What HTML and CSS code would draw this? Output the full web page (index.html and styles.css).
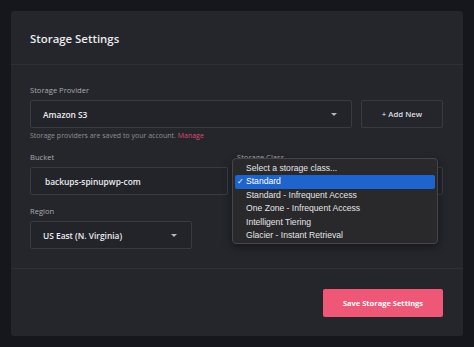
FILE: index.html
```html
<!DOCTYPE html>
<html>
<head>
<meta charset="utf-8">
<link rel="stylesheet" href="styles.css">
</head>
<body>
<div class="card">
  <div class="card-header"><h1 class="title">Storage Settings</h1></div>
  <div class="card-body">
    <div class="label">Storage Provider</div>
    <div class="row-provider">
      <div class="select"><span>Amazon S3</span><i class="caret"></i></div>
      <div class="btn-outline">+ Add New</div>
    </div>
    <div class="help">Storage providers are saved to your account. <span class="link">Manage</span></div>
    <div class="row-bucket">
      <div class="field">
        <div class="label">Bucket</div>
        <div class="input"><span>backups-spinupwp-com</span></div>
      </div>
      <div class="field class-field">
        <div class="label">Storage Class</div>
        <div class="input"></div>
        <div class="menu">
          <div class="opt">Select a storage class...</div>
          <div class="opt selected"><span class="check">✓</span>Standard</div>
          <div class="opt">Standard - Infrequent Access</div>
          <div class="opt">One Zone - Infrequent Access</div>
          <div class="opt">Intelligent Tiering</div>
          <div class="opt">Glacier - Instant Retrieval</div>
        </div>
      </div>
    </div>
    <div class="label region-label">Region</div>
    <div class="select region"><span>US East (N. Virginia)</span><i class="caret"></i></div>
  </div>
  <div class="card-footer">
    <div class="btn-primary">Save Storage Settings</div>
  </div>
</div>
</body>
</html>
```

FILE: styles.css
```css
* { box-sizing: border-box; }
html, body { margin: 0; }
body {
  background: #16171c;
  padding: 11px;
  font-family: "Open Sans", "Noto Sans", sans-serif;
  color: #e6e6e9;
  width: 474px;
  height: 347px;
  overflow: hidden;
}
.card {
  width: 452px;
  height: 325px;
  background: #25262c;
  border-radius: 3px;
  display: flex;
  flex-direction: column;
}
.card-header {
  height: 54px;
  padding-left: 19px;
  display: flex;
  align-items: center;
  border-bottom: 1px solid #2e2f35;
}
.title {
  margin: 0;
  font-size: 11.4px;
  font-weight: 600;
  color: #ececee;
  padding-top: 2px;
}
.card-body {
  padding: 20px 20px 19px 19px;
  border-bottom: 1px solid #2e2f35;
  display: flex;
  flex-direction: column;
}
.label {
  font-size: 7.6px;
  line-height: 10px;
  color: #a9aab0;
  margin-bottom: 5px;
}
.row-provider {
  display: flex;
  gap: 9px;
}
.select, .input {
  height: 28px;
  border: 1px solid #3a3b41;
  border-radius: 2px;
  background: #23242a;
  display: flex;
  align-items: center;
  padding: 0 13px 0 12px;
  font-size: 8.4px;
  font-weight: 600;
  color: #ececee;
}
.row-provider .select { width: 322px; justify-content: space-between; padding-right: 14px; }
.caret {
  width: 0; height: 0;
  border-left: 3px solid transparent;
  border-right: 3px solid transparent;
  border-top: 3px solid #b5b6bb;
}
.btn-outline {
  width: 82px;
  height: 28px;
  border: 1px solid #3a3b41;
  border-radius: 2px;
  display: flex;
  align-items: center;
  justify-content: center;
  font-size: 7.8px;
  font-weight: 600;
  color: #dcdde0;
}
.help {
  margin-top: 3px;
  font-size: 7px;
  line-height: 10px;
  color: #8e8f95;
}
.link { color: #d94c6c; }
.row-bucket {
  margin-top: 11px;
  display: grid;
  grid-template-columns: 198px 1fr;
  gap: 9px;
}
.input { padding-left: 14px; }
.class-field { position: relative; }
.menu {
  position: absolute;
  left: -5px;
  top: 6px;
  width: 206px;
  height: 86px;
  background: #29292c;
  border: 1px solid #46464a;
  border-radius: 4px;
  padding: 3px 2px;
  font-family: "Liberation Sans", "Helvetica", sans-serif;
  font-size: 8.6px;
  color: #e4e4e6;
  box-shadow: 0 3px 8px rgba(0,0,0,0.4);
}
.opt {
  height: 13.4px;
  line-height: 13.4px;
  padding-left: 11px;
  position: relative;
  white-space: nowrap;
}
.opt.selected {
  background: #1f63cc;
  border-radius: 2px;
  color: #ffffff;
}
.check {
  position: absolute;
  left: 2px;
  font-size: 8px;
}
.region-label { margin-top: 11px; }
.select.region { width: 162px; justify-content: space-between; padding-right: 14px; }
.card-footer {
  flex: 1;
  display: flex;
  align-items: center;
  justify-content: flex-end;
  padding-right: 20px;
}
.btn-primary {
  width: 120px;
  height: 28px;
  background: #ee5775;
  border-radius: 2px;
  display: flex;
  align-items: center;
  justify-content: center;
  font-size: 7.5px;
  font-weight: 700;
  color: #ffffff;
}
```
